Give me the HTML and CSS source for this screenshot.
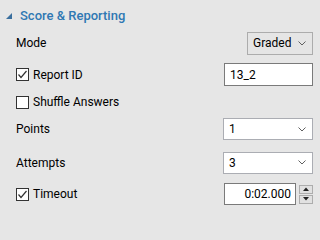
FILE: index.html
```html
<!DOCTYPE html>
<html>
<head>
<meta charset="utf-8">
<link rel="stylesheet" href="styles.css">
</head>
<body>
<div class="panel">
  <div class="header">
    <svg class="tri" width="6" height="6" viewBox="0 0 6 6"><polygon points="6,0 6,6 0,6" fill="#3a6f9e"/></svg>
    <span class="title">Score &amp; Reporting</span>
  </div>
  <div class="row r-mode">
    <span class="label">Mode</span>
    <div class="combo button">
      <span>Graded</span>
      <svg class="chev" width="8" height="5" viewBox="0 0 8 5"><polyline points="0.5,0.5 4,4 7.5,0.5" fill="none" stroke="#606060" stroke-width="1"/></svg>
    </div>
  </div>
  <div class="row r-report">
    <label class="check"><span class="box checked"><svg width="11" height="11" viewBox="0 0 11 11"><polyline points="1.5,5.5 4,8.5 9.5,2" fill="none" stroke="#333" stroke-width="1.2"/></svg></span>Report ID</label>
    <div class="text">13_2</div>
  </div>
  <div class="row r-shuffle">
    <label class="check"><span class="box"></span>Shuffle Answers</label>
  </div>
  <div class="row r-points">
    <span class="label">Points</span>
    <div class="combo edit">
      <span>1</span>
      <svg class="chev" width="8" height="5" viewBox="0 0 8 5"><polyline points="0.5,0.5 4,4 7.5,0.5" fill="none" stroke="#606060" stroke-width="1"/></svg>
    </div>
  </div>
  <div class="row r-attempts">
    <span class="label">Attempts</span>
    <div class="combo edit">
      <span>3</span>
      <svg class="chev" width="8" height="5" viewBox="0 0 8 5"><polyline points="0.5,0.5 4,4 7.5,0.5" fill="none" stroke="#606060" stroke-width="1"/></svg>
    </div>
  </div>
  <div class="row r-timeout">
    <label class="check"><span class="box checked"><svg width="11" height="11" viewBox="0 0 11 11"><polyline points="1.5,5.5 4,8.5 9.5,2" fill="none" stroke="#333" stroke-width="1.2"/></svg></span>Timeout</label>
    <div class="spin-wrap">
      <div class="time">0:02.000</div>
      <div class="spinner">
        <div class="sbtn"><svg width="6" height="4" viewBox="0 0 6 4"><polygon points="0,4 3,0.5 6,4" fill="#222"/></svg></div>
        <div class="sbtn"><svg width="6" height="4" viewBox="0 0 6 4"><polygon points="0,0 6,0 3,3.5" fill="#222"/></svg></div>
      </div>
    </div>
  </div>
</div>
</body>
</html>
```
FILE: styles.css
```css
html, body {
  margin: 0;
  padding: 0;
  background: #e6e6e6;
}
body {
  width: 319px;
  height: 213px;
  overflow: hidden;
  font-family: Roboto, "Noto Sans", sans-serif;
  font-size: 12px;
  color: #000;
}
.panel {
  display: flex;
  flex-direction: column;
}
.header {
  height: 30px;
  display: flex;
  align-items: center;
  padding-left: 6px;
}
.tri {
  margin-right: 8px;
  margin-top: 2px;
}
.title {
  color: #2f78b3;
  font-weight: 500;
  font-size: 13px;
}
.row {
  display: flex;
  align-items: center;
  justify-content: space-between;
  padding-left: 16px;
  padding-right: 6px;
}
.r-mode { height: 26px; }
.r-report { height: 37px; }
.r-shuffle { height: 18px; }
.r-points { height: 36px; }
.r-attempts { height: 31px; }
.r-timeout { height: 32px; }
.label { line-height: 16px; }
.check {
  display: flex;
  align-items: center;
}
.box {
  width: 11px;
  height: 11px;
  border: 1px solid #333;
  background: #fff;
  margin-right: 4px;
  display: flex;
  align-items: center;
  justify-content: center;
}
.combo {
  box-sizing: border-box;
  display: flex;
  align-items: center;
  justify-content: space-between;
  border: 1px solid #acacac;
}
.combo.button {
  width: 66px;
  height: 23px;
  background: #e5e5e5;
  padding: 0 6px 0 5px;
}
.combo.edit {
  width: 90px;
  height: 22px;
  background: #fff;
  border-color: #abadb3;
  padding: 0 6px 0 5px;
}
.text {
  box-sizing: border-box;
  width: 89px;
  height: 23px;
  border: 1px solid #7a7a7a;
  background: #fff;
  padding-left: 5px;
  display: flex;
  align-items: center;
}
.spin-wrap {
  display: flex;
  align-items: center;
}
.time {
  box-sizing: border-box;
  width: 72px;
  height: 22px;
  border: 1px solid #7a7a7a;
  background: #fff;
  display: flex;
  align-items: center;
  justify-content: flex-end;
  padding-right: 4px;
  margin-right: 3px;
}
.spinner {
  display: flex;
  flex-direction: column;
  gap: 1px;
}
.sbtn {
  box-sizing: border-box;
  width: 14px;
  height: 9px;
  border: 1px solid #adadad;
  background: #e1e1e1;
  display: flex;
  align-items: center;
  justify-content: center;
}
```
